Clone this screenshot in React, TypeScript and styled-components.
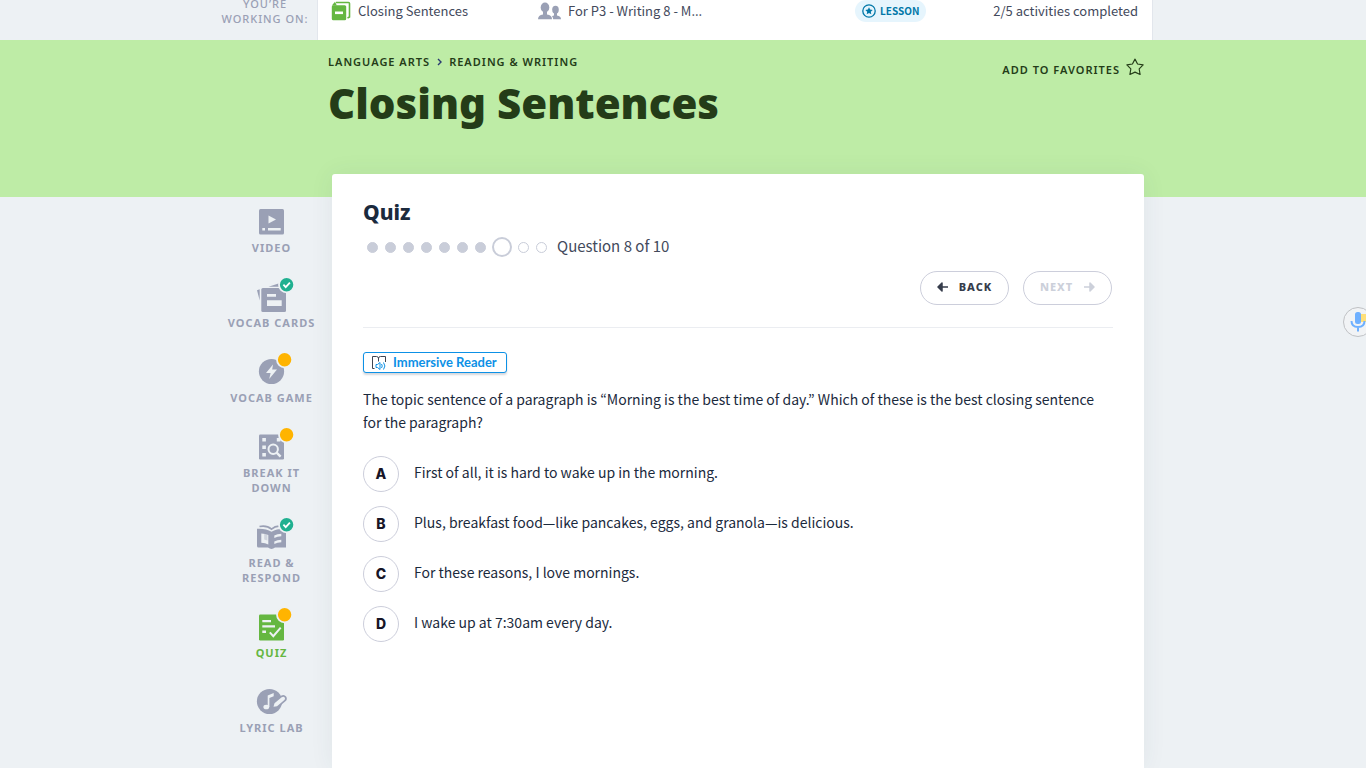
import React from "react";
import styled, { createGlobalStyle } from "styled-components";

const humanist = `"Noto Sans CJK JP", "Noto Sans", sans-serif`;
const slate = "#9aa0b5";
const green = "#65b741";
const canvas = "#edf1f4";

const GlobalStyle = createGlobalStyle`
  *, *::before, *::after { box-sizing: border-box; }
  body { margin: 0; background: ${canvas}; color: #1b2a3d; font-family: ${humanist}; }
  h1, h2, p, ul, ol { margin: 0; padding: 0; }
  ul, ol { list-style: none; }
  a { color: inherit; text-decoration: none; }
  button { font: inherit; cursor: pointer; }
`;

const Page = styled.div`
  min-height: 100vh;
  display: flex;
  flex-direction: column;
`;

const AssignmentBar = styled.div`
  width: 100%;
  max-width: 940px;
  height: 40px;
  margin: 0 auto;
  display: flex;
  overflow: hidden;
`;

const WorkingOn = styled.div`
  width: 104px;
  height: 26px;
  display: flex;
  flex-direction: column;
  justify-content: flex-end;
  text-align: center;
  color: ${slate};
  font-size: 11px;
  font-weight: 500;
  line-height: 15px;
  font-family: "Noto Sans", sans-serif;
  letter-spacing: 1px;
`;

const AssignmentInfo = styled.div`
  flex: 1;
  display: grid;
  grid-template-columns: 206px 318px 1fr auto;
  align-items: start;
  padding: 0 14px 0 13px;
  background: #fff;
  border: 1px solid #e2e6ec;
  border-width: 0 1px;
  color: #434a5c;
  font-size: 13px;
  line-height: 22px;
`;

const InfoItem = styled.div`
  display: flex;
  align-items: center;
  gap: 7px;
  height: 22px;
  white-space: nowrap;
`;

const LessonTag = styled.span`
  display: flex;
  align-items: center;
  gap: 4px;
  height: 22px;
  padding: 0 7px;
  border-radius: 11px;
  background: #e6f5fd;
  color: #0077a8;
  font-size: 10px;
  font-weight: 700;
`;

const Hero = styled.header`
  min-height: 157px;
  background: #beeca6;
  color: #243c18;
`;

const HeroInner = styled.div`
  max-width: 922px;
  margin: 0 auto;
  padding: 14px 0 0 106px;
  display: flex;
  justify-content: space-between;
  align-items: flex-start;
`;

const Breadcrumbs = styled.nav`
  display: flex;
  align-items: center;
  gap: 7px;
  font: 600 11px/16px "Noto Sans", sans-serif;
  letter-spacing: 1px;
`;

const Title = styled.h1`
  font: 900 42px/52px "Noto Sans", sans-serif;
  margin-top: 7px;
`;

const FavoriteButton = styled.button`
  display: flex;
  align-items: flex-end;
  gap: 6px;
  margin-top: 4px;
  padding: 0;
  border: 0;
  background: none;
  color: inherit;
  && { font: 600 11px/12px "Noto Sans", sans-serif; }
  letter-spacing: 1px;
`;

const Content = styled.div`
  flex: 1;
  width: 100%;
  max-width: 922px;
  margin: 0 auto;
  display: flex;
  gap: 12px;
`;

const SideNav = styled.nav`
  width: 98px;
  padding-top: 4px;
`;

const NavList = styled.ul`
  display: flex;
  flex-direction: column;
  gap: 21px;
`;

const NavLink = styled.a<{ $active?: boolean }>`
  display: flex;
  flex-direction: column;
  align-items: center;
  gap: 3px;
  color: ${(p) => (p.$active ? green : slate)};
  text-align: center;
  font: 700 11px/15px "Noto Sans", sans-serif;
  letter-spacing: 1px;
`;

const NavLabel = styled.span`
  max-width: 92px;
  padding-left: 1px;
`;

const Card = styled.main`
  flex: 1;
  margin-top: -23px;
  padding: 26px 31px 40px;
  background: #fff;
  border-radius: 3px 3px 0 0;
  box-shadow: 0 0 24px rgba(40, 70, 90, 0.07);
`;

const CardTitle = styled.h2`
  font: 800 21px/24px "Noto Sans", sans-serif;
`;

const Progress = styled.div`
  display: flex;
  align-items: center;
  height: 22px;
  margin-top: 12px;
  padding-left: 4px;
  color: #434a5c;
  font-size: 15px;
  line-height: 22px;
`;

const ProgressText = styled.span`
  padding-bottom: 2px;
`;

const Dots = styled.ol`
  display: flex;
  align-items: center;
  gap: 7px;
  margin-right: 10px;
`;

const Dot = styled.li<{ $state: "done" | "current" | "todo" }>`
  width: ${(p) => (p.$state === "current" ? 20 : 11)}px;
  height: ${(p) => (p.$state === "current" ? 20 : 11)}px;
  margin: 0 ${(p) => (p.$state === "current" ? -1 : 0)}px;
  border: ${(p) => (p.$state === "current" ? 2 : 1)}px solid #c9cdd9;
  border-radius: 50%;
  background: ${(p) => (p.$state === "done" ? "#c9cdd9" : "#fff")};
`;

const Pager = styled.div`
  display: flex;
  justify-content: flex-end;
  gap: 14px;
  margin-top: 13px;
  padding: 0 1px 22px 0;
  border-bottom: 1px solid #ebedf1;
`;

const PagerButton = styled.button`
  display: flex;
  align-items: center;
  justify-content: center;
  gap: 11px;
  min-width: 89px;
  height: 34px;
  padding: 0 15px 2px;
  border: 1px solid #cccedb;
  border-radius: 17px;
  background: #fff;
  color: #363c4b;
  && { font: 800 11px/16px "Noto Sans", sans-serif; }
  letter-spacing: 1px;
  &:disabled { color: #ccd0da; cursor: default; }
`;

const ReaderButton = styled.button`
  display: flex;
  align-items: center;
  gap: 6px;
  height: 21px;
  margin-top: 24px;
  padding: 0 9px 2px 7px;
  border: 1px solid #0d91e6;
  border-radius: 3px;
  background: #fff;
  box-shadow: 0 2px 2px rgba(50, 60, 80, 0.2);
  color: #0d91e6;
  && { font: 700 13px/18px Lato, sans-serif; }
`;

const Question = styled.fieldset`
  margin: 15px 0 0;
  padding: 0;
  border: 0;
  font-size: 14px;
  line-height: 23px;
`;

const Prompt = styled.legend`
  padding: 0 8px 0 0;
  margin-bottom: 22px;
`;

const Answers = styled.div`
  display: flex;
  flex-direction: column;
  align-items: flex-start;
  gap: 14px;
`;

const Answer = styled.label`
  display: grid;
  grid-template-columns: 36px auto;
  column-gap: 15px;
  cursor: pointer;
`;

const AnswerRadio = styled.input`
  grid-area: 1 / 1;
  appearance: none;
  width: 36px;
  height: 36px;
  margin: 0;
  border: 1px solid #cccedb;
  border-radius: 50%;
  background: #fff;
  &:checked { border-color: ${green}; }
`;

const AnswerLetter = styled.span`
  grid-area: 1 / 1;
  place-self: center;
  color: #171527;
  font: 800 14px/20px Inter, sans-serif;
`;

const AnswerText = styled.span`
  padding-top: 5px;
`;

const VoiceButton = styled.button`
  position: fixed;
  top: 307px;
  right: -7px;
  width: 30px;
  height: 30px;
  padding: 0;
  display: grid;
  place-items: center;
  border: 1px solid #bfc1c4;
  border-radius: 50%;
  background: #f1f3f5;
`;

const Glyph = styled.svg`
  display: block;
  flex: none;
`;

function Badge({ kind, x }: { kind: "done" | "started"; x: number }) {
  return (
    <>
      <circle cx={x} cy="8.7" r="7.6" fill={kind === "done" ? "#20b090" : "#ffb400"} stroke={canvas} strokeWidth="1.8" />
      {kind === "done" && <path d={`M${x - 3.2} 8.7l2.3 2.4 4.2-4.4`} fill="none" stroke="#fff" strokeWidth="1.8" />}
    </>
  );
}

const art: Record<string, React.ReactNode> = {
  video: (
    <>
      <rect x="10" y="8" width="25" height="25.5" rx="1.5" fill="currentColor" />
      <path d="M19.5 14.5v8l7.5-4zM13.3 27h2.7v2.4h-2.7zM19 27h12.7v2.4H19z" fill={canvas} />
    </>
  ),
  cards: (
    <>
      <path d="M8 14.2l2.7-.9v11.2zM19.5 10.8l10-3.2 2 3.2z" fill="currentColor" />
      <rect x="12.3" y="12" width="24.7" height="24" rx="1.5" fill="currentColor" />
      <path d="M18 18h9v2.7h-9zM18 24.3h14.7V30H18z" fill={canvas} />
      <Badge kind="done" x={37.6} />
    </>
  ),
  game: (
    <>
      <circle cx="22.5" cy="20.5" r="12.6" fill="currentColor" />
      <path d="M24 13.5L17 22h4.6l-1.4 6 7.8-9.6h-4.8z" fill={canvas} />
      <Badge kind="started" x={35.6} />
    </>
  ),
  breakdown: (
    <>
      <rect x="10" y="8.5" width="25" height="25" rx="1.2" fill="currentColor" />
      <path d="M13.3 12h3.6v3.6h-3.6zM13.3 19.5h3.6v3.6h-3.6zM13.3 27h3.6v3.6h-3.6zM27.8 12h3.6v3.6h-3.6z" fill={canvas} />
      <circle cx="24.2" cy="23.3" r="4.7" fill="currentColor" stroke={canvas} strokeWidth="2" />
      <path d="M27.6 26.7l4 4" stroke={canvas} strokeWidth="2.4" />
      <Badge kind="started" x={37.6} />
    </>
  ),
  read: (
    <>
      <path d="M10.5 10.5c5-1 9 0 12 2.6 2.5-2.2 6-3.3 9-2.9" fill="none" stroke="currentColor" strokeWidth="1.6" />
      <path d="M8 12.7q9-.5 14.5 3Q28 12.2 37 12.7v18.8h-11q-3.5 2.8-7 0H9.5q-1.5 0-1.5-1.5z" fill="currentColor" />
      <path d="M12.3 17.5q4.5 0 7 1.6v9.4q-3-1.6-7-1.7zM25.3 19.6q3-1.8 7-1.8v2.4q-4 0-7 1.9zM25.3 25.6q3-1.8 7-1.8v2.4q-4 0-7 1.9z" fill={canvas} />
      <path d="M15.2 17.6l3.2.8v6l-3.2-.8z" fill="currentColor" opacity="0.35" />
      <Badge kind="done" x={37.6} />
    </>
  ),
  quiz: (
    <>
      <rect x="10" y="8.5" width="25" height="26" rx="1.2" fill="currentColor" />
      <path d="M13.3 14H22v2.3h-8.7zM13.3 19.2H26v2.3H13.3zM13.3 24.6H17v2.3h-3.7z" fill={canvas} />
      <path d="M20.8 26.4l3.5 3.8 7.4-8.6" fill="none" stroke={canvas} strokeWidth="2" />
      <Badge kind="started" x={35.6} />
    </>
  ),
  lyric: (
    <>
      <circle cx="20.5" cy="20.5" r="12.6" fill="currentColor" />
      <ellipse cx="17.3" cy="26" rx="2.9" ry="2.3" fill={canvas} />
      <path d="M18.7 14.5l6-2.5v3.2l-4.3 1.8V26h-1.7z" fill={canvas} />
      <path d="M24.5 25.8l1-3.6 7.2-6q2-1.2 3 .2 1 1.5-.6 2.8L28 25.2z" fill="none" stroke="currentColor" strokeWidth="3.4" strokeLinejoin="round" />
      <path d="M24.5 25.8l1-3.6 7.2-6q2-1.2 3 .2 1 1.5-.6 2.8L28 25.2z" fill={canvas} />
    </>
  ),
};

const lessons = [
  { id: "video", label: "VIDEO" },
  { id: "cards", label: "VOCAB CARDS" },
  { id: "game", label: "VOCAB GAME" },
  { id: "breakdown", label: "BREAK IT DOWN" },
  { id: "read", label: "READ & RESPOND" },
  { id: "quiz", label: "QUIZ", active: true },
  { id: "lyric", label: "LYRIC LAB" },
];

const answers = [
  ["A", "First of all, it is hard to wake up in the morning."],
  ["B", "Plus, breakfast food—like pancakes, eggs, and granola—is delicious."],
  ["C", "For these reasons, I love mornings."],
  ["D", "I wake up at 7:30am every day."],
];

const total = 10;
const current = 8;

function Arrow({ flip }: { flip?: boolean }) {
  return (
    <Glyph width="11" height="10" viewBox="0 0 11 10" aria-hidden="true">
      <path d={flip ? "M0 5h6M6 1l4 4-4 4z" : "M11 5H5M5 1L1 5l4 4z"} fill="currentColor" stroke="currentColor" strokeWidth="1.5" strokeLinejoin="round" />
    </Glyph>
  );
}

export default function App() {
  return (
    <Page>
      <GlobalStyle />
      <AssignmentBar>
        <WorkingOn>
          <span>YOU’RE</span>
          <span>WORKING ON:</span>
        </WorkingOn>
        <AssignmentInfo>
          <InfoItem>
            <Glyph width="20" height="20" viewBox="0 0 20 20" aria-hidden="true">
              <path d="M5 1.5h12.5q1 0 1 1V16l-2 1" fill="none" stroke={green} strokeWidth="1.6" />
              <path d="M4 .8L.8 4.500h5z" fill={green} />
              <rect x=".8" y="4.3" width="14.4" height="15" rx="1.5" fill={green} />
              <path d="M4 10.5h8v2.6H4z" fill="#fff" />
            </Glyph>
            <span>Closing Sentences</span>
          </InfoItem>
          <InfoItem>
            <Glyph width="24" height="18" viewBox="0 0 24 18" fill={slate} aria-hidden="true">
              <ellipse cx="8" cy="5.5" rx="4.3" ry="5" />
              <path d="M6 9h4v3.5q5 .6 5 4.7H1q0-4 5-4.7z" />
              <ellipse cx="18.5" cy="7.7" rx="3.3" ry="3.9" />
              <path d="M17 10.5h3v3q4 .5 4 3.7h-7.8q-.2-2-1.2-3 .8-.6 2-.7z" />
            </Glyph>
            <span>For P3 - Writing 8 - M...</span>
          </InfoItem>
          <InfoItem>
            <LessonTag>
              <Glyph width="14" height="14" viewBox="0 0 14 14" aria-hidden="true">
                <circle cx="7" cy="7" r="6.2" fill="none" stroke="currentColor" strokeWidth="1.3" />
                <path d="M7 3.3l1.1 2.3 2.6.3-1.9 1.8.5 2.6L7 9l-2.3 1.3.5-2.6-1.9-1.8 2.6-.3z" fill="currentColor" />
              </Glyph>
              LESSON
            </LessonTag>
          </InfoItem>
          <InfoItem>2/5 activities completed</InfoItem>
        </AssignmentInfo>
      </AssignmentBar>

      <Hero>
        <HeroInner>
          <div>
            <Breadcrumbs aria-label="Breadcrumb">
              <a href="#language-arts">LANGUAGE ARTS</a>
              <Glyph width="5" height="8" viewBox="0 0 5 8" aria-hidden="true">
                <path d="M1 1l3 3-3 3" fill="none" stroke="#2a3a70" strokeWidth="1.4" />
              </Glyph>
              <a href="#reading-writing">READING &amp; WRITING</a>
            </Breadcrumbs>
            <Title>Closing Sentences</Title>
          </div>
          <FavoriteButton type="button">
            ADD TO FAVORITES
            <Glyph width="18" height="18" viewBox="0 0 19 19" aria-hidden="true">
              <path d="M9.5 1.2l2.7 5.1 5.9.9-4.2 4.2 1 6-5.4-2.500-5.4 2.500 1-6L.9 7.200l5.900-.900z" fill="none" stroke="currentColor" strokeWidth="1.2" strokeLinejoin="round" />
            </Glyph>
          </FavoriteButton>
        </HeroInner>
      </Hero>

      <Content>
        <SideNav aria-label="Activities">
          <NavList>
            {lessons.map((l) => (
              <li key={l.id}>
                <NavLink href={`#${l.id}`} $active={l.active}>
                  <Glyph width="44" height="36" viewBox="0 0 44 36" overflow="visible" aria-hidden="true">
                    {art[l.id]}
                  </Glyph>
                  <NavLabel>{l.label}</NavLabel>
                </NavLink>
              </li>
            ))}
          </NavList>
        </SideNav>

        <Card>
          <CardTitle>Quiz</CardTitle>
          <Progress>
            <Dots aria-hidden="true">
              {Array.from({ length: total }, (_, i) => (
                <Dot key={i} $state={i + 1 < current ? "done" : i + 1 === current ? "current" : "todo"} />
              ))}
            </Dots>
            <ProgressText>Question {current} of {total}</ProgressText>
          </Progress>
          <Pager>
            <PagerButton type="button"><Arrow />BACK</PagerButton>
            <PagerButton type="button" disabled>NEXT<Arrow flip /></PagerButton>
          </Pager>
          <ReaderButton type="button">
            <Glyph width="16" height="16" viewBox="0 0 16 16" fill="none" aria-hidden="true">
              <path d="M3.5 14.5h-2v-12h4q1.8 0 2 1.8.2-1.8 2-1.8h5V8M7.5 4v3.5" stroke="#3f4450" />
              <path d="M5 10.5h1.500l2.500-2v7l-2.500-2H5zM10.500 10q1.500 2 0 4M12.500 8.500q2.800 3.500 0 7" stroke="#0d91e6" />
            </Glyph>
            Immersive Reader
          </ReaderButton>
          <Question>
            <Prompt>
              The topic sentence of a paragraph is “Morning is the best time of day.” Which of these is the best closing sentence for the paragraph?
            </Prompt>
            <Answers>
              {answers.map(([letter, text]) => (
                <Answer key={letter}>
                  <AnswerRadio type="radio" name="answer" value={letter} />
                  <AnswerLetter>{letter}</AnswerLetter>
                  <AnswerText>{text}</AnswerText>
                </Answer>
              ))}
            </Answers>
          </Question>
        </Card>
      </Content>

      <VoiceButton type="button" aria-label="Voice typing">
        <Glyph width="16" height="22" viewBox="0 0 16 22" aria-hidden="true">
          <path d="M9 3h7v8H9z" fill="#ffe07a" />
          <rect x="5" y="1" width="6" height="12" rx="2.5" fill="#6eb0ff" />
          <path d="M1.5 10q0 6 6.5 6t6.5-6M8 16v4.5" fill="none" stroke="#6eb0ff" strokeWidth="2" />
        </Glyph>
      </VoiceButton>
    </Page>
  );
}
